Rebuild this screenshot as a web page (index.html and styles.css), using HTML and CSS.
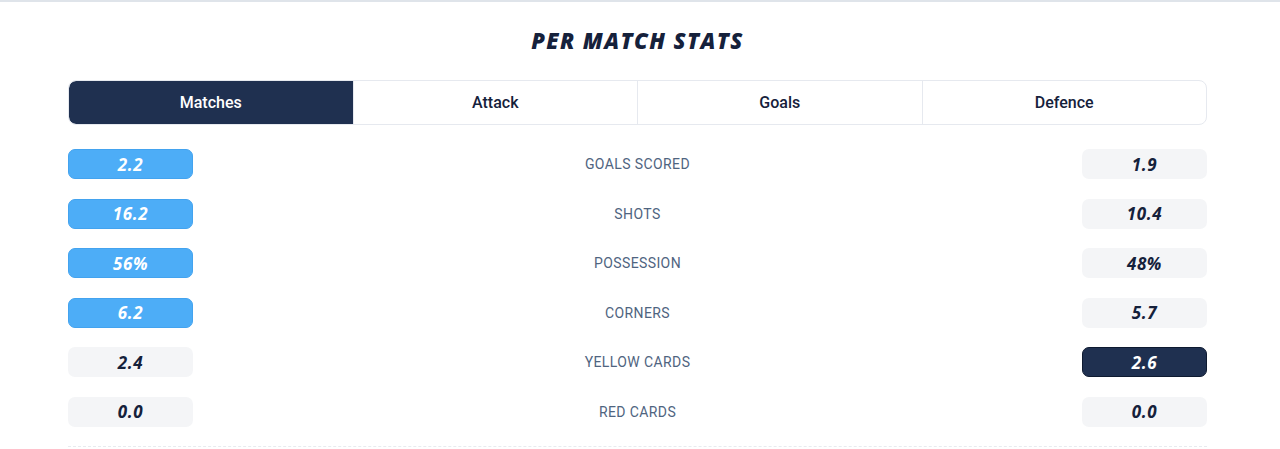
FILE: index.html
```html
<!DOCTYPE html>
<html lang="en">
<head>
    <meta charset="UTF-8">
    <meta name="viewport" content="width=device-width, initial-scale=1.0">
    <title>Per Match Stats</title>
    <link rel="stylesheet" href="styles.css">
</head>
<body>
    <div class="topbar"></div>
    <div class="container">
        <h2 class="title">PER MATCH STATS</h2>

        <div class="tabs">
            <div class="tab active">Matches</div>
            <div class="tab">Attack</div>
            <div class="tab">Goals</div>
            <div class="tab">Defence</div>
        </div>

        <div class="stats">
            <div class="stat-row">
                <div class="pill blue">2.2</div>
                <div class="label">GOALS SCORED</div>
                <div class="pill">1.9</div>
            </div>
            <div class="stat-row">
                <div class="pill blue">16.2</div>
                <div class="label">SHOTS</div>
                <div class="pill">10.4</div>
            </div>
            <div class="stat-row">
                <div class="pill blue">56%</div>
                <div class="label">POSSESSION</div>
                <div class="pill">48%</div>
            </div>
            <div class="stat-row">
                <div class="pill blue">6.2</div>
                <div class="label">CORNERS</div>
                <div class="pill">5.7</div>
            </div>
            <div class="stat-row">
                <div class="pill">2.4</div>
                <div class="label">YELLOW CARDS</div>
                <div class="pill dark">2.6</div>
            </div>
            <div class="stat-row">
                <div class="pill">0.0</div>
                <div class="label">RED CARDS</div>
                <div class="pill">0.0</div>
            </div>
        </div>
    </div>
</body>
</html>
```

FILE: styles.css
```css
* {
    margin: 0;
    padding: 0;
    box-sizing: border-box;
}

body {
    background-color: #fff;
    font-family: Roboto, Arial, sans-serif;
}

.topbar {
    height: 2px;
    background-color: #dfe4ea;
}

.container {
    width: 1139px;
    margin: 0 0 0 68px;
}

.title {
    text-align: center;
    font-family: "Open Sans", Arial, sans-serif;
    font-style: italic;
    font-weight: 800;
    font-size: 22px;
    color: #15213b;
    letter-spacing: 1.4px;
    margin-top: 24px;
    height: 54px;
    line-height: 28px;
}

.tabs {
    display: flex;
    height: 45px;
    border: 1px solid #e6e9ef;
    border-radius: 8px;
    overflow: hidden;
}

.tab {
    flex: 1;
    display: flex;
    align-items: center;
    justify-content: center;
    font-size: 16px;
    font-weight: 500;
    color: #15213b;
    border-left: 1px solid #e6e9ef;
}

.tab:first-child {
    border-left: none;
}

.tab.active {
    background-color: #1f3050;
    color: #fff;
    border-radius: 7px 0 0 7px;
}

.stats {
    padding-top: 24px;
    padding-bottom: 19px;
    border-bottom: 1px dashed #e8ebef;
}

.stat-row {
    display: flex;
    align-items: center;
    justify-content: space-between;
    height: 30px;
    margin-bottom: 19.6px;
}

.stat-row:last-child {
    margin-bottom: 0;
}

.pill {
    width: 125px;
    height: 30px;
    border-radius: 7px;
    background-color: #f4f5f7;
    color: #15213b;
    display: flex;
    align-items: center;
    justify-content: center;
    font-family: "Open Sans", Arial, sans-serif;
    font-style: italic;
    font-weight: 700;
    font-size: 17px;
    letter-spacing: 0.6px;
}

.pill.blue {
    background-color: #4dadf7;
    color: #fff;
    border: 1px solid #43a3ef;
}

.pill.dark {
    background-color: #1f3050;
    color: #fff;
    border: 1px solid #0e1a30;
}

.label {
    font-size: 14px;
    letter-spacing: 0.4px;
    color: #4f6480;
}
```
